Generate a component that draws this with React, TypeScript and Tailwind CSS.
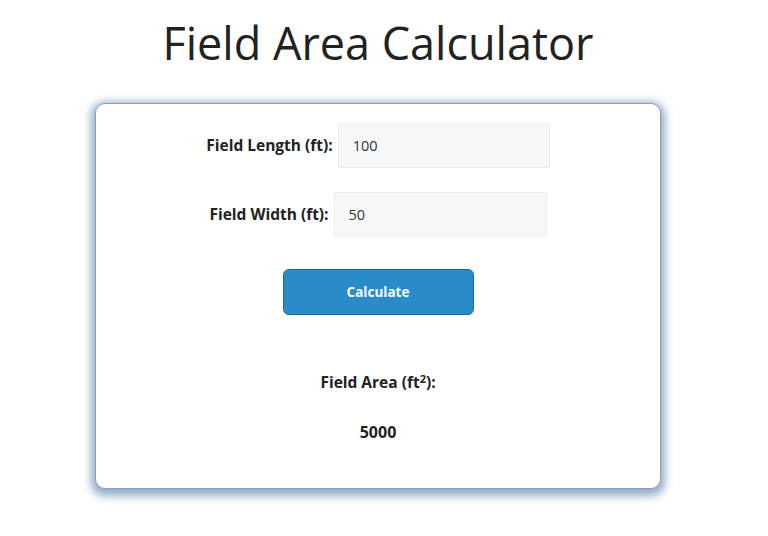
export default function App() {
  return (
    <div className="min-h-[536px] w-[756px] bg-white text-[#222] [font-family:'Open_Sans',sans-serif]">
      <h1 className="pt-[12px] text-center text-[45px] font-normal leading-[62px] text-[#222]">
        Field Area Calculator
      </h1>
      <div className="mx-auto mt-[29px] flex h-[386px] w-[566px] flex-col items-center rounded-[10px] border border-[#86a0bb] bg-white pt-[19px] shadow-[0_3px_9px_4px_rgba(95,128,170,0.65)]">
        <div className="flex items-center gap-[5px]">
          <label className="text-[15.5px] font-bold text-[#222]">Field Length (ft):</label>
          <input
            defaultValue="100"
            className="h-[45px] w-[212px] border border-[#eceef0] bg-[#f6f7f9] px-[14px] text-[14.5px] text-[#333] outline-none"
          />
        </div>
        <div className="mt-[24px] flex items-center gap-[5px]">
          <label className="text-[15.5px] font-bold text-[#222]">Field Width (ft):</label>
          <input
            defaultValue="50"
            className="h-[45px] w-[213px] border border-[#eceef0] bg-[#f6f7f9] px-[14px] text-[14.5px] text-[#333] outline-none"
          />
        </div>
        <button className="mt-[32px] h-[46px] w-[191px] rounded-[6px] border border-[#1c69a8] bg-[#2a8bc9] text-[13.5px] font-bold text-white">
          Calculate
        </button>
        <div className="mt-[56px] text-[15.5px] font-bold text-[#222]">
          Field Area (ft<sup className="text-[11px]">2</sup>):
        </div>
        <div className="mt-[26px] text-[16px] font-bold text-[#222]">5000</div>
      </div>
    </div>
  );
}
